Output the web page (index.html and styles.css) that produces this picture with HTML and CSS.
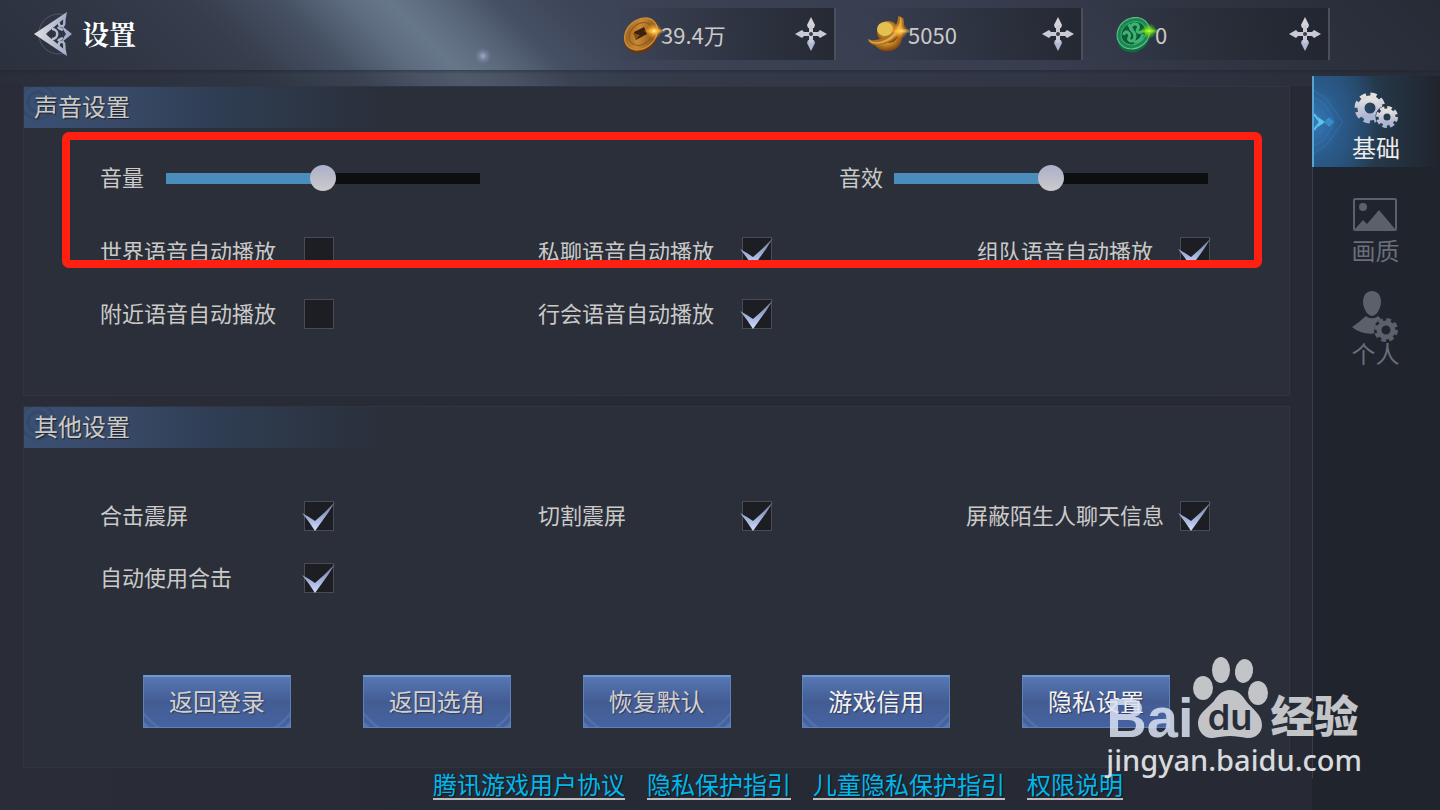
FILE: index.html
```html
<!DOCTYPE html>
<html lang="zh-CN">
<head>
    <meta charset="UTF-8">
    <meta name="viewport" content="width=device-width, initial-scale=1.0">
    <title>设置</title>
    <link rel="stylesheet" href="styles.css">
</head>
<body>
    <svg class="defs" width="0" height="0" aria-hidden="true">
        <defs>
            <linearGradient id="silver" x1="0" y1="0" x2="0" y2="1">
                <stop offset="0" stop-color="#e6e0df"/>
                <stop offset="1" stop-color="#aab3d2"/>
            </linearGradient>
            <linearGradient id="silverLeft" x1="0" y1="0" x2="38" y2="0" gradientUnits="userSpaceOnUse">
                <stop offset="0" stop-color="#e3dfdf"/>
                <stop offset="1" stop-color="#98a5c6"/>
            </linearGradient>
            <linearGradient id="gold" x1="0" y1="0" x2="1" y2="1">
                <stop offset="0" stop-color="#8a5218"/>
                <stop offset="0.45" stop-color="#c98a30"/>
                <stop offset="1" stop-color="#6e3c10"/>
            </linearGradient>
            <radialGradient id="goldBall" cx="0.45" cy="0.4" r="0.6">
                <stop offset="0" stop-color="#f2dc6a"/>
                <stop offset="0.5" stop-color="#c98b25"/>
                <stop offset="1" stop-color="#7a3f10"/>
            </radialGradient>
            <radialGradient id="glow">
                <stop offset="0" stop-color="#fff6c0"/>
                <stop offset="0.25" stop-color="#ffc545" stop-opacity="0.9"/>
                <stop offset="1" stop-color="#ff9a20" stop-opacity="0"/>
            </radialGradient>
            <radialGradient id="greenGlow">
                <stop offset="0" stop-color="#f0ff90"/>
                <stop offset="0.25" stop-color="#8cf01c" stop-opacity="0.9"/>
                <stop offset="1" stop-color="#40c020" stop-opacity="0"/>
            </radialGradient>
            <symbol id="plus" viewBox="0 0 32 34">
                <g fill="#c9cad6">
                    <path d="M16 0l4 8-1 3h-6l-1-3z" fill="#d6d2d5"/>
                    <path d="M16 34l4-8-1-3h-6l-1 3z" fill="#b0b8d4"/>
                    <path d="M0 17l7-4 2 2v4l-2 2zM32 17l-7-4-2 2v4l2 2z"/>
                    <path d="M14 8h4v7h9v4h-9v7h-4v-7H5v-4h9z"/>
                </g>
                <circle cx="16" cy="17" r="2" fill="#3b3e49"/>
            </symbol>
        </defs>
    </svg>

    <header class="topbar">
        <button class="back" type="button" aria-label="返回">
            <svg width="38" height="44" viewBox="0 0 38 44">
                <path d="M31 3A20 20 0 1 0 31 41" fill="none" stroke="#505665" stroke-width="1"/>
                <path fill="url(#silverLeft)" d="M0 22L33 0l-1 5-18 15-2 2 2 2 18 15 1 5z"/>
                <g fill="none" stroke="url(#silverLeft)" stroke-width="2.500">
                    <path d="M31 4c-2 5 1 8-2 10-3 1-5-1-4-4"/>
                    <path d="M31 40c-2-5 1-8-2-10-3-1-5 1-4 4"/>
                    <path d="M18 17c7 0 7 10 0 10"/>
                    <path d="M24 15c1 2 3 2 5 3M24 29c1-2 3-2 5-3"/>
                </g>
                <path fill="url(#silverLeft)" d="M28 14l10 8-10 8 2-5 2-3-2-3z"/>
            </svg>
        </button>
        <h1>设置</h1>
        <ul class="wallet">
            <li>
                <svg class="coin" width="46" height="40" viewBox="0 0 46 40">
                    <g transform="rotate(-42 20 20)">
                        <ellipse cx="18" cy="22" rx="18" ry="15" fill="#673711"/>
                        <ellipse cx="20" cy="20" rx="18" ry="14" fill="url(#gold)" stroke="#c98b38" stroke-width="1.500"/>
                        <ellipse cx="20" cy="20" rx="13" ry="10" fill="none" stroke="#8f591f" stroke-width="1"/>
                    </g>
                    <path d="M13 18l10-5 3 7-11 6z" fill="#40200c"/>
                    <path d="M12 19l7 2-4 5z" fill="#7e4f1c"/>
                    <ellipse cx="34" cy="17" rx="12" ry="3" fill="url(#glow)"/>
                    <circle cx="33" cy="17" r="8" fill="url(#glow)"/>
                </svg>
                <span>39.4万</span>
                <button type="button" aria-label="充值金币"><svg width="32" height="34"><use href="#plus"/></svg></button>
            </li>
            <li>
                <svg class="coin" width="46" height="40" viewBox="0 0 46 40">
                    <path d="M4 27c10 3 22-5 28-12 4 3 3 14-3 19-7 6-20 4-25-7z" fill="url(#goldBall)"/>
                    <circle cx="20" cy="18" r="11" fill="url(#goldBall)"/>
                    <path d="M0 25c2 7 9 7 17 5 13-4 22-17 18-26l-5-2c1 12-14 26-27 24z" fill="#b0701d"/>
                    <path d="M0 25c6 6 17 3 24-4 6-6 9-13 8-19 5 8-1 19-10 24-9 5-20 5-22-1z" fill="#d9ad4c"/>
                    <ellipse cx="17" cy="15" rx="8" ry="7" fill="#e3c04f"/>
                    <circle cx="32" cy="17" r="8" fill="url(#glow)"/>
                    <ellipse cx="33" cy="17" rx="12" ry="3" fill="url(#glow)"/>
                </svg>
                <span>5050</span>
                <button type="button" aria-label="充值元宝"><svg width="32" height="34"><use href="#plus"/></svg></button>
            </li>
            <li>
                <svg class="coin" width="46" height="40" viewBox="0 0 46 40">
                    <g transform="rotate(-35 19 20)">
                        <ellipse cx="17" cy="22" rx="17" ry="15" fill="#0d6b3f"/>
                        <ellipse cx="19" cy="19" rx="17" ry="15" fill="#178a50" stroke="#6fc392" stroke-width="1"/>
                        <ellipse cx="19" cy="19" rx="13" ry="11" fill="#0e5b37" stroke="#3faa70" stroke-width="1"/>
                        <path d="M10 15c5-5 7 4 3 5s0 8 5 3-2-9 3-11 9 4 4 6 1 6 3 4M14 27c5 2 9 2 12-2M20 9v7" fill="none" stroke="#3fb274" stroke-width="3"/>
                    </g>
                    <circle cx="34" cy="17" r="8" fill="url(#greenGlow)"/>
                    <ellipse cx="34" cy="17" rx="12" ry="3" fill="url(#greenGlow)"/>
                </svg>
                <span>0</span>
                <button type="button" aria-label="充值玉石"><svg width="32" height="34"><use href="#plus"/></svg></button>
            </li>
        </ul>
    </header>

    <div class="layout">
        <main>
            <section class="panel sound">
                <h2>声音设置</h2>
                <div class="sliders">
                    <div class="slider music">
                        <label for="volume">音量</label>
                        <input type="range" id="volume" min="0" max="100" value="50">
                    </div>
                    <div class="slider effect">
                        <label for="effect">音效</label>
                        <input type="range" id="effect" min="0" max="100" value="50">
                    </div>
                </div>
                <div class="checks">
                    <label class="check"><span>世界语音自动播放</span><input type="checkbox"></label>
                    <label class="check"><span>私聊语音自动播放</span><input type="checkbox" checked></label>
                    <label class="check center"><span>组队语音自动播放</span><input type="checkbox" checked></label>
                    <label class="check"><span>附近语音自动播放</span><input type="checkbox"></label>
                    <label class="check"><span>行会语音自动播放</span><input type="checkbox" checked></label>
                </div>
                <div class="highlight"></div>
            </section>

            <section class="panel other">
                <h2>其他设置</h2>
                <div class="checks">
                    <label class="check"><span>合击震屏</span><input type="checkbox" checked></label>
                    <label class="check"><span>切割震屏</span><input type="checkbox" checked></label>
                    <label class="check center"><span>屏蔽陌生人聊天信息</span><input type="checkbox" checked></label>
                    <label class="check"><span>自动使用合击</span><input type="checkbox" checked></label>
                </div>
                <div class="actions">
                    <button type="button">返回登录</button>
                    <button type="button">返回选角</button>
                    <button type="button">恢复默认</button>
                    <button type="button" class="bright">游戏信用</button>
                    <button type="button" class="bright">隐私设置</button>
                </div>
            </section>

            <nav class="links">
                <a href="#">腾讯游戏用户协议</a>
                <a href="#">隐私保护指引</a>
                <a href="#">儿童隐私保护指引</a>
                <a href="#">权限说明</a>
            </nav>
        </main>

        <nav class="tabs">
            <button type="button" class="tab active">
                <svg class="ornament" width="32" height="91" viewBox="0 0 32 91" fill="none" stroke="#3b8fd0">
                    <path d="M0 14c3 5 8 4 13 10 6 8 10 14 16 22-6 8-10 14-16 22-5 6-10 5-13 10M0 22c10 2 16 14 20 24C16 56 10 67 0 69" opacity="0.350"/>
                    <path d="M0 38l6 8-6 8" stroke="#5cc3ee" stroke-width="2"/>
                    <path d="M4 41l7 5-7 5 2-5z" fill="#5cc3ee" stroke="none"/>
                    <path d="M15 41l5 5-5 5-5-5z" fill="#3a8cc8" stroke="none"/>
                </svg>
                <svg width="48" height="52" viewBox="0 0 48 52" fill="none" stroke="url(#silver)">
                    <circle cx="18" cy="23" r="9" stroke-width="7"/>
                    <circle cx="18" cy="23" r="13" stroke-width="5" stroke-dasharray="6 4.210"/>
                    <circle cx="35" cy="32" r="10" fill="#253a4d" stroke="#253a4d" stroke-width="3"/>
                    <circle cx="35" cy="32" r="6" stroke-width="5"/>
                    <circle cx="35" cy="32" r="9" stroke-width="4" stroke-dasharray="4.300 2.768"/>
                </svg>
                <span>基础</span>
            </button>
            <button type="button" class="tab">
                <svg width="48" height="52" viewBox="0 0 48 52">
                    <rect x="2" y="11" width="42" height="31" rx="1" fill="none" stroke="#5c606b" stroke-width="2"/>
                    <circle cx="11" cy="19" r="4" fill="#5c606b"/>
                    <path d="M3 41l8-9 4 4 12-14 16 19z" fill="#5c606b"/>
                </svg>
                <span>画质</span>
            </button>
            <button type="button" class="tab">
                <svg width="48" height="52" viewBox="0 0 48 52">
                    <path d="M20 0c6 0 9 5 9 11 0 5-4 14-9 14s-9-9-9-14c0-6 3-11 9-11z" fill="#5c606b"/>
                    <path d="M14 25c3 3 9 3 12 0l5 5-6 12c-9 2-18 0-25-6 5-3 9-7 14-11z" fill="#5c606b"/>
                    <g fill="none" stroke="#5c606b">
                        <circle cx="34" cy="39" r="10" fill="#21252e" stroke="#21252e" stroke-width="4"/>
                        <circle cx="34" cy="39" r="7" stroke-width="5"/>
                        <circle cx="34" cy="39" r="10" stroke-width="4" stroke-dasharray="4.600 3.254"/>
                    </g>
                </svg>
                <span>个人</span>
            </button>
        </nav>
    </div>

    <div class="watermark">
        <div class="brand">
            <span class="bai">Bai</span>
            <svg width="76" height="82" viewBox="0 0 76 82">
                <g fill="#c3c4c8">
                    <ellipse cx="11" cy="31" rx="10" ry="12"/>
                    <ellipse cx="29" cy="13" rx="9" ry="13"/>
                    <ellipse cx="52" cy="14" rx="9" ry="12" transform="rotate(10 52 14)"/>
                    <ellipse cx="66" cy="36" rx="10" ry="12"/>
                    <path d="M38 33c8 0 12 5 16 11 6 8 16 13 16 24 0 8-7 14-15 13-6-1-11-2-17-2s-11 1-17 2C13 82 6 75 6 66c0-10 10-15 16-22 4-6 8-11 16-11z"/>
                </g>
                <text x="38" y="73" text-anchor="middle" class="du">du</text>
            </svg>
            <span class="jy">经验</span>
        </div>
        <div class="site">jingyan.baidu.com</div>
    </div>
</body>
</html>
```
FILE: styles.css
```css
* {
    box-sizing: border-box;
}
body {
    margin: 0;
    min-height: 100vh;
    position: relative;
    overflow: hidden;
    display: flex;
    flex-direction: column;
    font-family: "Noto Sans CJK SC", sans-serif;
    font-size: 22px;
    line-height: 32px;
    color: #cbcac9;
    background:
        linear-gradient(45deg, #2a303c 0, #303644 10%, #363d4c 18%, #465164 24%, #5d6b7f 28%, #67778a 31%, #5c6a7e 34%, #465064 38%, #3d4558 43%, #3a4153 50%, #383e50 68%, #2e3340 85%, #272b36 100%) 0 0 / 100% 86px no-repeat,
        linear-gradient(90deg, #2a2d38 0, #262a35 50%, #272a35 100%);
}
h1, h2, ul {
    margin: 0;
    padding: 0;
    list-style: none;
}
button {
    font: inherit;
    color: inherit;
    padding: 0;
    border: 0;
    background: none;
    cursor: pointer;
}
svg {
    display: block;
}
.defs {
    position: absolute;
}

/* top bar */
.topbar {
    height: 70px;
    display: flex;
    align-items: center;
    padding: 0 110px 2px 34px;
    background: radial-gradient(circle at 483px 56px, #a0a8c8 0, #8b94b080 4px, transparent 8px);
}
.back {
    margin-right: 10px;
}
h1 {
    font-family: "Noto Serif CJK SC", "Noto Sans CJK SC", serif;
    font-size: 27px;
    font-weight: bold;
    color: #fff;
}
.wallet {
    margin-left: auto;
    display: flex;
    gap: 26px;
}
.wallet li {
    width: 221px;
    height: 52px;
    display: flex;
    align-items: center;
    padding: 0 7px 0 6px;
    border-right: 2px solid #4b4f5d;
    background: linear-gradient(90deg, transparent, #20242dcc);
}
.wallet .coin {
    margin-right: -6px;
}
.wallet button {
    margin-left: auto;
}

/* main layout */
.layout {
    flex: 1;
    display: flex;
    gap: 22px;
    padding-top: 6px;
    background: linear-gradient(#1f222c99 0, #262a3560 4px, #262a3560 16px, transparent 24px);
}
main {
    flex: 1;
    padding: 10px 0 0 23px;
}
.panel {
    position: relative;
    border: 1px solid #303541;
    background: #2a2f3a;
    margin-bottom: 10px;
}
.panel h2 {
    height: 41px;
    padding-left: 10px;
    font-size: 24px;
    font-weight: normal;
    line-height: 38px;
    text-shadow: 1px 1px 1px #1c202a;
    background:
        radial-gradient(circle at 14px 15px, #34486a 3px, transparent 4px 8px, #344868 9px 11px, transparent 12px 15px, #34496b 16px 18px, transparent 19px) 0 0 / 34px 41px no-repeat,
        linear-gradient(90deg, #3a5074 0, #384a68 90px, #2f3d52 200px, #2a2f3a 360px);
}
.sliders {
    display: flex;
    justify-content: space-between;
    padding: 34px 81px 0 76px;
}
.slider {
    display: flex;
    align-items: center;
}
.slider label {
    line-height: 28px;
    padding-bottom: 4px;
}
.music {
    gap: 22px;
}
.effect {
    gap: 11px;
}
.slider input {
    appearance: none;
    width: 314px;
    height: 11px;
    margin: 0;
    background: linear-gradient(90deg, #4a8cbb 50%, #0d0e10 50%);
}
.slider input::-webkit-slider-thumb {
    appearance: none;
    width: 26px;
    height: 26px;
    border-radius: 50%;
    background: linear-gradient(#abb0c9, #cbcacc);
}
.checks {
    display: grid;
    grid-template-columns: 438fr 428fr 246fr;
    row-gap: 30px;
    padding: 0 77px 0 76px;
}
.sound .checks {
    padding-top: 42px;
    padding-bottom: 65px;
}
.other .checks {
    padding-top: 52px;
}
.check {
    display: flex;
    align-items: center;
    width: 236px;
}
.check span {
    flex: 1;
    white-space: nowrap;
    line-height: 28px;
    padding-bottom: 4px;
}
.check.center {
    width: 246px;
}
.check.center span {
    text-align: center;
}
.check input {
    appearance: none;
    position: relative;
    flex: none;
    width: 30px;
    height: 30px;
    margin: 0 2px 0 0;
    border: 1px solid #484a56;
    background: #1d1e23;
}
.check.center input {
    margin-left: 16px;
}
.check input:checked::after {
    content: "";
    position: absolute;
    left: -3px;
    top: -1px;
    width: 35px;
    height: 30px;
    background: linear-gradient(#6a7590, #a3b2dc 60%, #d3e0ff);
    clip-path: polygon(0 12px, 7px 16px, 13px 20px, 22px 12px, 33px 1px, 26px 12px, 13px 30px, 7px 21px);
}
/* marks the rows being explained */
.highlight {
    position: absolute;
    left: 38px;
    right: 27px;
    top: 45px;
    height: 136px;
    border: 8px solid #ff2012;
    border-radius: 7px;
    pointer-events: none;
}
.actions {
    display: flex;
    justify-content: space-between;
    padding: 81px 119px 39px 119px;
}
.actions button {
    width: 148px;
    height: 53px;
    padding-bottom: 2px;
    font-size: 24px;
    color: #d3d0d0;
    text-shadow: 1px 1px 1px #2b3a5c;
    border: 1px solid #5b82bd;
    border-top: 2px solid #6f97d0;
    background:
        radial-gradient(circle at 54px -6px, transparent 67px, #6286bb80 69px, transparent 71px 73px, #6286bb90 75px) 0 0 / 50% 100% no-repeat,
        radial-gradient(circle at 19px -6px, transparent 67px, #6286bb80 69px, transparent 71px 73px, #6286bb90 75px) 100% 0 / 50% 100% no-repeat,
        linear-gradient(#5777b3, #435c93 50%, #4663a0);
}
.actions .bright {
    color: #f2f2f2;
}
.links {
    display: flex;
    gap: 22px;
    padding-left: 410px;
    margin-top: -8px;
    font-size: 24px;
}
.links a {
    color: #00b7ea;
    height: 30px;
    white-space: nowrap;
    line-height: 28px;
    text-decoration: none;
    border-bottom: 2px solid #bdbdbd;
    text-shadow: 1px 1px 1px #12161f;
}

/* side tabs */
.tabs {
    width: 128px;
    display: flex;
    flex-direction: column;
    gap: 12px;
    border-left: 1px solid #3b3f4b;
    margin-bottom: 32px;
    background: #20242d;
    box-shadow: 0 32px 0 #20242d;
}
.tab {
    position: relative;
    height: 91px;
    padding: 9px 2px 8px 0;
    display: flex;
    flex-direction: column;
    align-items: center;
    font-size: 24px;
    line-height: 20px;
    color: #696e7a;
}
.tab.active {
    color: #eeebea;
    background: radial-gradient(ellipse 68px 90px at 0 50%, #3579b9, #2a5a8a 40%, transparent), linear-gradient(90deg, #284d70, #243443 60%, #20242d);
    border-left: 2px solid #55a5d3;
    margin-left: -1px;
}
.ornament {
    position: absolute;
    left: 0;
    top: 0;
}

/* watermark over the page corner */
.watermark {
    position: absolute;
    right: 78px;
    bottom: 29px;
    color: #c3c4c8;
    pointer-events: none;
}
.brand {
    display: flex;
    align-items: flex-end;
    height: 82px;
}
.brand .bai {
    font-family: "Liberation Sans", sans-serif;
    font-size: 56px;
    line-height: 43px;
    font-weight: bold;
    color: #dbe2f3d9;
    margin-right: -1px;
}
.brand .jy {
    margin-left: 2px;
    font-size: 44px;
    line-height: 50px;
    font-weight: 900;
}
.du {
    font-family: Inter, sans-serif;
    font-size: 36px;
    font-weight: 600;
    fill: #292d38;
}
.site {
    font-family: "Noto Sans", sans-serif;
    font-size: 29px;
    font-weight: 500;
    line-height: 42px;
    color: #d9dadd;
}
```
